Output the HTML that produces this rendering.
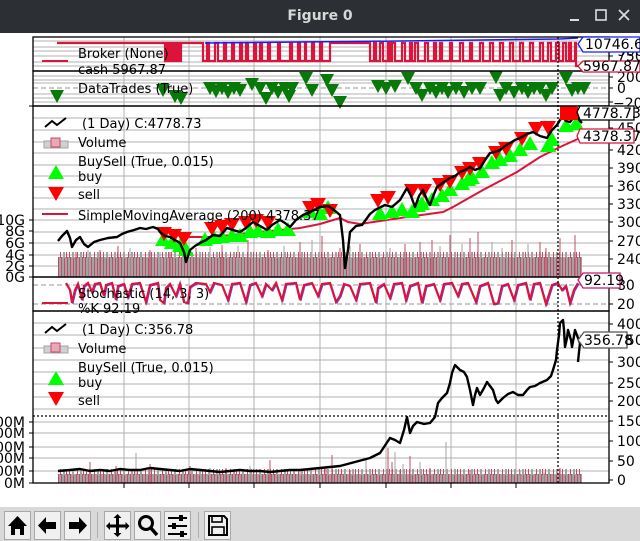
<!DOCTYPE html>
<html><head><meta charset="utf-8"><style>
html,body{margin:0;padding:0;background:#fff;width:640px;height:541px;overflow:hidden}
svg{display:block}
text{font-family:"DejaVu Sans","Liberation Sans",sans-serif}
</style></head><body>
<svg width="640" height="541" viewBox="0 0 640 541" xmlns="http://www.w3.org/2000/svg">
<defs>
<polygon id="b" points="-8,6 8,6 0,-8" fill="#00ff00"/>
<polygon id="s" points="-8,-6 8,-6 0,8" fill="#ff0000"/>
<polygon id="d" points="-7,-6 7,-6 0,7" fill="#087808"/>
<pattern id="vp" width="6" height="40" patternUnits="userSpaceOnUse">
<rect x="0" y="0" width="6" height="40" fill="#a3a3a3"/>
<rect x="1" y="0" width="1" height="40" fill="#c24d66"/>
<rect x="4" y="0" width="1" height="40" fill="#c24d66"/>
</pattern>
<pattern id="vp2" width="17" height="40" patternUnits="userSpaceOnUse">
<rect x="1" y="0" width="1" height="40" fill="#c24d66"/>
<rect x="4" y="3" width="2" height="40" fill="#a3a3a3"/>
<rect x="9" y="1" width="1" height="40" fill="#c24d66"/>
<rect x="12" y="4" width="2" height="40" fill="#a3a3a3"/>
<rect x="15" y="2" width="1" height="40" fill="#c24d66"/>
</pattern>
</defs>
<!-- title bar -->
<rect x="0" y="0" width="640" height="33" fill="#2c2f33"/>
<text x="320" y="20" font-size="14" font-weight="bold" fill="#d8d8d8" text-anchor="middle">Figure 0</text>
<rect x="570" y="19" width="9" height="2" fill="#ddd"/>
<rect x="596" y="10" width="10" height="10" fill="none" stroke="#ddd" stroke-width="1.6"/>
<path d="M619 10 L629 20 M629 10 L619 20" stroke="#ddd" stroke-width="1.8"/>

<!-- grids -->
<g stroke="#b0b0b0" stroke-width="1">
<path d="M33 41H609M33 47H609M33 51H609M33 56H609M33 62H609M33 66H609"/>
<path d="M33 76H609M33 80H609M33 83H609M33 94H609M33 98H609M33 102H609"/>
<path d="M33 118H609M33 130H609M33 142H609M33 153H609M33 165H609M33 176H609M33 187H609M33 198H609M33 209H609M33 220H609M33 232H609M33 243H609M33 255H609M33 266H609"/>
<path d="M33 323H609M33 335H609M33 348H609M33 360H609M33 372H609M33 384H609M33 397H609M33 409H609M33 422H609M33 433H609M33 447H609M33 458H609M33 471H609"/>
<path d="M124 37V483M189 37V483M254 37V483M320 37V483M386 37V483M451 37V483M516 37V483"/>
</g>
<path d="M33 88H609M33 285H609M33 304H609" stroke="#b8b8b8" stroke-width="1.5" stroke-dasharray="5,3"/>

<!-- broker -->
<path d="M57 43H165V61H167V43H169V61H171V43H173V61H175V43H177V61H179V43H180V61H181V43H203V61H207V43H209V61H215V43H218V61H224V43H226V61H232V43H234V61H240V43H242V61H246V43H248V61H254V43H256V61H260V43H262V61H268V43H270V61H278V43H280V61H290V43H292V61H298V43H300V61H305V43H306V61H312V43H314V61H320V43H322V61H330V43H370V61H374V43H376V61H380V43H383V61H388V43H390V61H392V43H395V61H402V43H405V61H410V43H412V61H415V43H418V61H425V43H428V61H434V43H436V61H440V43H442V61H450V43H452V61H460V43H463V61H470V43H472V61H480V43H483V61H490V43H493V61H500V43H503V61H510V43H513V61H520V43H523V61H530V43H533V61H540V43H543V61H548V43H551V61H556V43H559V61H563V43H566V61H569V43H571V61H575V43H576V66H580" fill="none" stroke="#dc143c" stroke-width="2.2"/>
<path d="M205 43L300 42L400 41L480 40L560 39L578 38" fill="none" stroke="#1a1aff" stroke-width="1.5"/>
<path d="M42 61H68" stroke="#dc143c" stroke-width="2"/>
<text x="78" y="58" font-size="13">Broker (None)</text>
<text x="78" y="74" font-size="13">cash 5967.87</text>

<!-- datatrades -->
<g>
<use href="#d" x="57" y="96"/><use href="#d" x="163" y="90"/><use href="#d" x="175" y="96"/><use href="#d" x="181" y="98"/>
<use href="#d" x="210" y="88"/><use href="#d" x="216" y="91"/><use href="#d" x="222" y="88"/><use href="#d" x="228" y="92"/><use href="#d" x="234" y="88"/><use href="#d" x="240" y="90"/>
<use href="#d" x="252" y="84"/><use href="#d" x="260" y="88"/><use href="#d" x="266" y="98"/><use href="#d" x="272" y="88"/><use href="#d" x="278" y="92"/><use href="#d" x="285" y="88"/><use href="#d" x="292" y="88"/><use href="#d" x="289" y="96"/>
<use href="#d" x="306" y="78"/><use href="#d" x="312" y="90"/><use href="#d" x="327" y="80"/><use href="#d" x="332" y="90"/><use href="#d" x="340" y="102"/>
<use href="#d" x="378" y="86"/><use href="#d" x="386" y="88"/><use href="#d" x="395" y="86"/><use href="#d" x="408" y="78"/><use href="#d" x="416" y="88"/><use href="#d" x="422" y="95"/><use href="#d" x="430" y="88"/><use href="#d" x="436" y="92"/><use href="#d" x="442" y="88"/><use href="#d" x="448" y="92"/><use href="#d" x="456" y="88"/><use href="#d" x="464" y="92"/><use href="#d" x="472" y="88"/><use href="#d" x="480" y="88"/>
<use href="#d" x="496" y="77"/><use href="#d" x="500" y="95"/><use href="#d" x="506" y="88"/><use href="#d" x="514" y="92"/><use href="#d" x="522" y="88"/><use href="#d" x="528" y="92"/><use href="#d" x="534" y="88"/><use href="#d" x="540" y="88"/><use href="#d" x="546" y="95"/><use href="#d" x="552" y="88"/>
<use href="#d" x="566" y="78"/><use href="#d" x="572" y="90"/><use href="#d" x="578" y="88"/><use href="#d" x="584" y="88"/>
</g>
<text x="78" y="93" font-size="13">DataTrades (True)</text>

<!-- main volume -->
<rect x="58" y="257" width="524" height="20" fill="url(#vp)"/>
<rect x="58" y="252" width="524" height="6" fill="url(#vp2)"/>
<g stroke="#c24d66" stroke-width="1">
<path d="M76 277V252M100 277V250M118 277V246M150 277V250M170 277V252M196 277V248M222 277V245M248 277V240M268 277V250M300 277V242M322 277V236M340 277V248M360 277V244M405 277V244M420 277V242M432 277V240M450 277V235M470 277V238M478 277V232M512 277V240M540 277V242M546 277V248M560 277V238M575 277V235"/>
</g>
<g stroke="#a3a3a3" stroke-width="1">
<path d="M88 277V250M130 277V248M160 277V252M210 277V247M238 277V246M284 277V246M312 277V240M350 277V246M390 277V248M440 277V246M462 277V244M492 277V242M502 277V248M528 277V244"/>
</g>
<!-- SMA -->
<polyline points="160,230 185,237 213,237 260,232 300,228 320,224 340,218 348,222 360,224 380,221 400,218 443,212 453,207 483,190 517,172 540,157 560,147 580,138" fill="none" stroke="#dc143c" stroke-width="2"/>
<!-- buys -->
<g>
<use href="#b" x="163" y="240"/><use href="#b" x="172" y="243"/><use href="#b" x="180" y="246"/><use href="#b" x="186" y="250"/>
<use href="#b" x="205" y="240"/><use href="#b" x="214" y="238"/><use href="#b" x="222" y="237"/><use href="#b" x="232" y="236"/><use href="#b" x="240" y="236"/><use href="#b" x="250" y="232"/><use href="#b" x="258" y="231"/><use href="#b" x="268" y="232"/><use href="#b" x="278" y="230"/><use href="#b" x="288" y="230"/>
<use href="#b" x="310" y="212"/><use href="#b" x="320" y="214"/><use href="#b" x="328" y="208"/>
<use href="#b" x="380" y="214"/><use href="#b" x="392" y="212"/><use href="#b" x="402" y="210"/><use href="#b" x="412" y="212"/><use href="#b" x="418" y="206"/><use href="#b" x="422" y="204"/><use href="#b" x="432" y="200"/><use href="#b" x="442" y="196"/><use href="#b" x="450" y="190"/>
<use href="#b" x="462" y="184"/><use href="#b" x="468" y="180"/><use href="#b" x="472" y="178"/><use href="#b" x="482" y="172"/><use href="#b" x="492" y="163"/><use href="#b" x="500" y="160"/><use href="#b" x="510" y="156"/><use href="#b" x="520" y="150"/><use href="#b" x="530" y="144"/><use href="#b" x="548" y="146"/><use href="#b" x="552" y="140"/><use href="#b" x="566" y="126"/><use href="#b" x="576" y="124"/>
</g>
<!-- sells -->
<g>
<use href="#s" x="164" y="233"/><use href="#s" x="174" y="235"/><use href="#s" x="184" y="238"/>
<use href="#s" x="212" y="228"/><use href="#s" x="222" y="226"/><use href="#s" x="232" y="224"/><use href="#s" x="246" y="222"/><use href="#s" x="256" y="220"/><use href="#s" x="268" y="222"/>
<use href="#s" x="310" y="207"/><use href="#s" x="318" y="204"/><use href="#s" x="330" y="210"/>
<use href="#s" x="378" y="200"/><use href="#s" x="388" y="197"/><use href="#s" x="412" y="190"/><use href="#s" x="424" y="190"/><use href="#s" x="440" y="184"/><use href="#s" x="450" y="181"/>
<use href="#s" x="462" y="172"/><use href="#s" x="470" y="168"/><use href="#s" x="480" y="163"/><use href="#s" x="496" y="152"/><use href="#s" x="506" y="148"/><use href="#s" x="522" y="138"/><use href="#s" x="536" y="128"/><use href="#s" x="548" y="127"/><use href="#s" x="568" y="112"/>
</g>
<!-- main price -->
<polyline points="58,241 62,236 67,231 70,238 72,247 76,240 80,237 84,244 88,247 94,242 100,240 108,238 117,237 122,234 127,232 134,230 140,228 146,229 153,227 158,229 160,232 165,236 170,237 175,240 180,243 184,252 186,262 188,256 190,250 195,246 200,243 206,240 213,235 220,236 227,228 233,230 240,232 246,228 253,222 260,226 267,230 272,225 280,220 285,223 290,227 296,220 303,215 310,212 320,207 328,206 334,210 340,215 343,240 345,268 348,250 350,232 356,226 362,225 370,214 375,210 385,205 392,207 400,200 407,188 411,196 415,207 419,196 423,190 427,200 430,205 434,194 437,187 444,182 450,178 455,176 460,172 465,170 470,167 475,170 480,168 485,160 490,153 495,152 500,150 505,146 510,143 515,140 520,138 527,134 533,132 540,136 547,138 552,130 557,125 560,120 563,117 566,121 570,122 573,118 577,117 580,121 582,123" fill="none" stroke="#000" stroke-width="2.4" stroke-linejoin="round"/>
<!-- main legend -->
<path d="M45 127L52 121L57 125L66 118" fill="none" stroke="#000" stroke-width="2"/>
<text x="82" y="128" font-size="13">(1 Day) C:4778.73</text>
<rect x="44" y="141" width="24" height="7" fill="#d0d0d0" stroke="#a3a3a3"/>
<rect x="51" y="138" width="9" height="9" fill="#e8a8b4" stroke="#c24d66"/>
<text x="78" y="147" font-size="13">Volume</text>
<text x="78" y="166" font-size="13">BuySell (True, 0.015)</text>
<use href="#b" x="56" y="173"/>
<text x="78" y="181" font-size="13">buy</text>
<use href="#s" x="56" y="193"/>
<text x="78" y="199" font-size="13">sell</text>
<path d="M42 214H68" stroke="#dc143c" stroke-width="2"/>
<text x="78" y="220" font-size="13">SimpleMovingAverage (200) 4378.37</text>

<!-- stochastic -->
<polyline points="66,283 70,290 72,303 75,290 78,284 82,300 84,286 88,283 92,292 95,284 100,283 104,296 106,285 112,283 116,300 118,286 124,284 128,297 132,284 140,283 144,296 146,302 150,285 158,283 160,300 164,303 166,288 170,284 176,296 180,284 184,302 188,303 190,287 196,283 206,284 210,292 214,283 222,285 228,300 232,284 240,283 246,302 250,285 256,283 262,296 266,284 272,290 276,283 282,300 286,284 296,283 300,300 304,285 312,283 318,296 322,284 330,283 336,302 340,296 344,284 350,286 356,300 360,284 370,283 376,303 378,288 384,284 390,298 394,284 402,283 406,300 410,286 418,283 422,303 426,286 434,284 440,300 444,284 452,283 458,296 462,284 468,283 476,302 480,286 488,283 494,304 498,303 502,286 508,284 514,300 518,285 526,283 530,300 534,284 540,283 546,304 552,285 558,283 562,290 566,286 570,303 574,290 578,283" fill="none" stroke="#4a4aff" stroke-width="1" transform="translate(1,1)"/>
<polyline points="66,283 70,290 72,303 75,290 78,284 82,300 84,286 88,283 92,292 95,284 100,283 104,296 106,285 112,283 116,300 118,286 124,284 128,297 132,284 140,283 144,296 146,302 150,285 158,283 160,300 164,303 166,288 170,284 176,296 180,284 184,302 188,303 190,287 196,283 206,284 210,292 214,283 222,285 228,300 232,284 240,283 246,302 250,285 256,283 262,296 266,284 272,290 276,283 282,300 286,284 296,283 300,300 304,285 312,283 318,296 322,284 330,283 336,302 340,296 344,284 350,286 356,300 360,284 370,283 376,303 378,288 384,284 390,298 394,284 402,283 406,300 410,286 418,283 422,303 426,286 434,284 440,300 444,284 452,283 458,296 462,284 468,283 476,302 480,286 488,283 494,304 498,303 502,286 508,284 514,300 518,285 526,283 530,300 534,284 540,283 546,304 552,285 558,283 562,290 566,286 570,303 574,290 578,283" fill="none" stroke="#dc143c" stroke-width="2.2"/>
<path d="M42 303H68" stroke="#dc143c" stroke-width="2"/>
<text x="78" y="298" font-size="13">Stochastic (14, 3, 3)</text>
<text x="78" y="313" font-size="13">%K 92.19</text>

<!-- lower volume -->
<rect x="58" y="474" width="524" height="9" fill="url(#vp)"/>
<rect x="58" y="469" width="524" height="6" fill="url(#vp2)"/>
<g stroke="#c24d66"><path d="M90 483V462M116 483V466M150 483V464M190 483V466M226 483V468M270 483V460M326 483V466M332 483V455M350 483V470M388 483V448M392 483V462M400 483V470M410 483V456M430 483V468M470 483V470M560 483V468"/></g>
<g stroke="#a3a3a3"><path d="M136 483V453M210 483V468M250 483V466M300 483V470M366 483V460M395 483V452M403 483V464M446 483V442M420 483V462M520 483V470M544 483V472"/></g>
<!-- lower price -->
<polyline points="58,471 70,470 80,469 90,471 100,470 110,471 120,469 130,470 140,470 150,468 160,469 170,470 180,471 190,469 200,470 210,471 220,472 230,471 240,470 250,471 260,471 270,472 280,471 290,470 300,470 310,469 320,468 330,467 340,466 355,462 370,458 380,453 386,444 390,438 395,440 400,443 404,430 407,417 410,433 413,426 417,422 424,424 430,423 435,417 438,403 442,398 447,393 450,383 452,373 455,365 458,368 460,370 464,372 467,377 470,390 473,405 475,395 477,388 480,395 484,388 487,382 490,386 493,390 496,400 498,403 503,398 508,394 513,392 518,395 523,395 527,390 530,387 535,386 540,383 547,380 551,376 553,370 556,360 557,350 559,335 560,323 563,320 564,330 565,347 567,338 568,330 571,340 572,347 574,336 575,330 578,338 580,343 579,352 578,362" fill="none" stroke="#000" stroke-width="2.4" stroke-linejoin="round"/>
<!-- lower legend -->
<path d="M45 333L52 327L57 331L66 324" fill="none" stroke="#000" stroke-width="2"/>
<text x="82" y="334" font-size="13">(1 Day) C:356.78</text>
<rect x="44" y="346" width="24" height="7" fill="#d0d0d0" stroke="#a3a3a3"/>
<rect x="51" y="343" width="9" height="9" fill="#e8a8b4" stroke="#c24d66"/>
<text x="78" y="353" font-size="13">Volume</text>
<text x="78" y="372" font-size="13">BuySell (True, 0.015)</text>
<use href="#b" x="56" y="379"/>
<text x="78" y="387" font-size="13">buy</text>
<use href="#s" x="56" y="398"/>
<text x="78" y="405" font-size="13">sell</text>

<!-- dotted lines -->
<path d="M558 37V483" stroke="#000" stroke-width="1.3" stroke-dasharray="2,2"/>
<path d="M33 416H609" stroke="#000" stroke-width="1.3" stroke-dasharray="2,2"/>

<!-- axes frames -->
<g fill="none" stroke="#000" stroke-width="1.3">
<rect x="33" y="37" width="576" height="34"/>
<rect x="33" y="71" width="576" height="35"/>
<rect x="33" y="106" width="576" height="171"/>
<rect x="33" y="277" width="576" height="34"/>
<rect x="33" y="311" width="576" height="172"/>
</g>
<!-- ticks -->
<g stroke="#000" stroke-width="1">
<path d="M124 483v5M189 483v5M254 483v5M320 483v5M386 483v5M451 483v5M516 483v5"/>
<path d="M609 51h4M609 56h4M609 77h4M609 88h4M609 102h4M609 128h4M609 150h4M609 168h4M609 186h4M609 204h4M609 222h4M609 241h4M609 259h4M609 285h4M609 304h4M609 324h4M609 340h4M609 362h4M609 383h4M609 401h4M609 421h4M609 441h4M609 461h4M609 480h4"/>
<path d="M29 220h4M29 231h4M29 243h4M29 255h4M29 266h4M29 277h4M29 422h4M29 433h4M29 447h4M29 458h4M29 471h4M29 483h4M29 106h4"/>
</g>
<!-- right labels -->
<g font-size="14" fill="#000">
<text x="617" y="56">9000</text><text x="617" y="61">7500</text>
<text x="617" y="82">2000</text><text x="617" y="93">0</text><text x="613" y="108">−20</text>
<text x="617" y="133">4500</text><text x="617" y="155">4200</text><text x="617" y="173">3900</text><text x="617" y="191">3600</text><text x="617" y="209">3300</text><text x="617" y="227">3000</text><text x="617" y="246">2700</text><text x="617" y="264">2400</text>
<text x="617" y="290">80</text><text x="617" y="309">20</text>
<text x="617" y="329">400</text><text x="617" y="345">350</text><text x="617" y="367">300</text><text x="617" y="388">250</text><text x="617" y="406">200</text><text x="617" y="426">150</text><text x="617" y="446">100</text><text x="617" y="466">50</text><text x="617" y="485">0</text>
</g>
<!-- left labels -->
<g font-size="14" fill="#000" text-anchor="end">
<text x="25" y="225">10G</text><text x="25" y="236">8G</text><text x="25" y="248">6G</text><text x="25" y="260">4G</text><text x="25" y="271">2G</text><text x="25" y="282">0G</text>
<text x="25" y="427">00M</text><text x="25" y="438">00M</text><text x="25" y="452">00M</text><text x="25" y="463">00M</text><text x="25" y="476">00M</text><text x="25" y="488">0M</text>
</g>
<!-- value boxes -->
<g font-size="14">
<path d="M578 44L583 37H640V52H583Z" fill="#fff" stroke="#1a1aff" stroke-width="1.3"/><text x="585" y="49">10746.60</text>
<path d="M578 66L583 61H640V72H583Z" fill="#fff" stroke="#dc143c" stroke-width="1.3"/><text x="583" y="71">5967.87</text>
<rect x="560" y="107" width="18" height="13" fill="#ff0000"/>
<path d="M577 112L580 106H634V120H580Z" fill="#fff" stroke="#000" stroke-width="1.3"/><text x="583" y="118">4778.73</text>
<path d="M577 136L580 129H634V143H580Z" fill="#fff" stroke="#dc143c" stroke-width="1.3"/><text x="583" y="141">4378.37</text>
<path d="M578 280L583 273H620V288H583Z" fill="#fff" stroke="#c8186e" stroke-width="1.3"/><text x="584" y="285">92.19</text>
<path d="M578 340L584 332H627V348H584Z" fill="#fff" stroke="#555" stroke-width="1.3"/><text x="584" y="345">356.78</text>
</g>

<!-- toolbar -->
<rect x="0" y="507" width="640" height="34" fill="#d9d9d9"/>
<g fill="#f0f0f0" stroke="#a8a8a8">
<rect x="4.5" y="511.5" width="26" height="28"/><rect x="34.5" y="511.5" width="26" height="28"/><rect x="64.5" y="511.5" width="26" height="28"/>
<rect x="104.5" y="511.5" width="26" height="28"/><rect x="134.5" y="511.5" width="26" height="28"/><rect x="164.5" y="511.5" width="26" height="28"/>
<rect x="204.5" y="511.5" width="26" height="28"/>
</g>
<path d="M97.5 512V538M198.5 512V538" stroke="#b0b0b0"/>
<path d="M8 526L17.5 516L27 526H24V535H20V529H15V535H11V526Z" fill="#000"/>
<path d="M38 525.5L46 517V522H56V529H46V534Z" fill="#000"/>
<path d="M87 525.5L79 517V522H69V529H79V534Z" fill="#000"/>
<path d="M117.5 514L121.5 518H119V524.5H125.5V522L129.5 526L125.5 530V527.5H119V533H121.5L117.5 537L113.5 533H116V527.5H110V530L106 526L110 522V524.5H116V518H113.5Z" fill="#000"/>
<circle cx="146" cy="523" r="6.5" fill="none" stroke="#000" stroke-width="3"/>
<path d="M150 527L157 535" stroke="#000" stroke-width="3.5"/>
<path d="M168 518H187M168 526H187M168 534H187" stroke="#000" stroke-width="2"/>
<rect x="179" y="515" width="4" height="6" fill="#000"/><rect x="172" y="523" width="4" height="6" fill="#000"/><rect x="180" y="531" width="4" height="6" fill="#000"/>
<path d="M209 516H224L227 519V535H209Z" fill="none" stroke="#000" stroke-width="2"/>
<rect x="212" y="516" width="10" height="6" fill="none" stroke="#000" stroke-width="1.6"/>
<rect x="212" y="527" width="12" height="8" fill="none" stroke="#000" stroke-width="1.6"/>
</svg>
</body></html>
